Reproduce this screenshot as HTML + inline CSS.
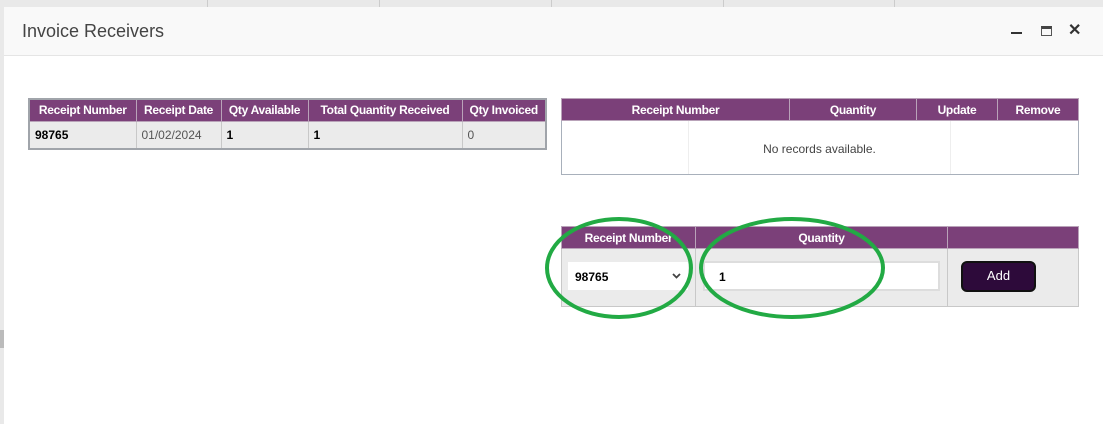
<!DOCTYPE html>
<html><head><style>
*{box-sizing:border-box;margin:0;padding:0}
body{width:1103px;height:424px;background:#e9e9e9;position:relative;overflow:hidden;font-family:"Liberation Sans",sans-serif}
.abs{position:absolute}
.modal{left:4px;top:7px;width:1099px;height:417px;background:#fff}
.hdr{left:0;top:0;width:1099px;height:49px;background:#f9f9f9;border-bottom:1px solid #e5e5e5}
table{border-collapse:collapse;position:absolute;font-size:12px}
th{background:#7b4079;color:#fff;font-weight:bold;font-size:12px;letter-spacing:-0.3px;border:1px solid #b9a3b9;height:22px;padding:0 2px;white-space:nowrap}
td{border:1px solid #c8c8c8;background:#ebebeb;padding:0 5px}
</style></head><body>
<div class="abs" style="left:207px;top:0;width:1px;height:7px;background:#ccc"></div>
<div class="abs" style="left:379px;top:0;width:1px;height:7px;background:#ccc"></div>
<div class="abs" style="left:551px;top:0;width:1px;height:7px;background:#ccc"></div>
<div class="abs" style="left:723px;top:0;width:1px;height:7px;background:#ccc"></div>
<div class="abs" style="left:894px;top:0;width:1px;height:7px;background:#ccc"></div>
<div class="abs" style="left:0;top:330px;width:4px;height:18px;background:#bbb"></div>
<div class="abs modal">
 <div class="abs hdr">
  <div class="abs" style="left:18px;top:14px;font-size:18px;color:#444">Invoice Receivers</div>
  <div class="abs" style="left:1007px;top:25px;width:11px;height:2px;background:#333"></div>
  <div class="abs" style="left:1037px;top:19px;width:11px;height:10px;border:1.5px solid #555;border-top:3px solid #444"></div>
  <div class="abs" style="left:1064px;top:13px;font-size:16px;font-weight:bold;color:#333">✕</div>
 </div>
</div>
<table style="left:28px;top:98px;width:519px;border:2px solid #a0a4aa">
<tr><th style="width:107px">Receipt Number</th><th style="width:85px">Receipt Date</th><th style="width:87px">Qty Available</th><th style="width:154px">Total Quantity Received</th><th>Qty Invoiced</th></tr>
<tr style="height:28px"><td style="font-weight:bold">98765</td><td style="color:#555">01/02/2024</td><td style="font-weight:bold">1</td><td style="font-weight:bold">1</td><td style="color:#555">0</td></tr>
</table>
<table style="left:561px;top:98px;width:518px;border:1px solid #9aa">
<tr><th style="width:228px">Receipt Number</th><th style="width:127px">Quantity</th><th style="width:81px">Update</th><th>Remove</th></tr>
</table>
<div class="abs" style="left:561px;top:121px;width:518px;height:54px;border:1px solid #a8b0bb;border-top:none;background:#fff"></div>
<div class="abs" style="left:688px;top:121px;width:263px;height:53px;border-left:1px solid #eee;border-right:1px solid #eee;text-align:center;line-height:56px;font-size:12px;color:#444">No records available.</div>
<table style="left:561px;top:226px;width:518px;border:1px solid #999">
<tr><th style="width:134px;height:20px">Receipt Number</th><th style="width:252px;height:20px">Quantity</th><th></th></tr>
<tr style="height:58px"><td></td><td></td><td></td></tr>
</table>
<div class="abs" style="left:568px;top:262px;width:120px;height:28px;background:#fff;font-size:12px;font-weight:bold;padding:8px 7px">98765<svg style="position:absolute;right:7px;top:11px" width="9" height="6"><path d="M1 1L4.5 4.5L8 1" fill="none" stroke="#444" stroke-width="1.8"/></svg></div>
<div class="abs" style="left:703px;top:261px;width:237px;height:30px;background:#fff;border:2px solid #ddd;font-size:12px;font-weight:bold;padding:7px 14px">1</div>
<div class="abs" style="left:961px;top:261px;width:75px;height:31px;background:#2d0a3a;border:2px solid #111;border-radius:6px;color:#fff;font-size:13px;text-align:center;line-height:26px">Add</div>
<svg class="abs" style="left:0;top:0" width="1103" height="424">
<ellipse cx="619" cy="268" rx="72" ry="49" fill="none" stroke="#22aa44" stroke-width="4"/>
<ellipse cx="792" cy="268" rx="91" ry="49" fill="none" stroke="#22aa44" stroke-width="4"/>
</svg>
</body></html>
